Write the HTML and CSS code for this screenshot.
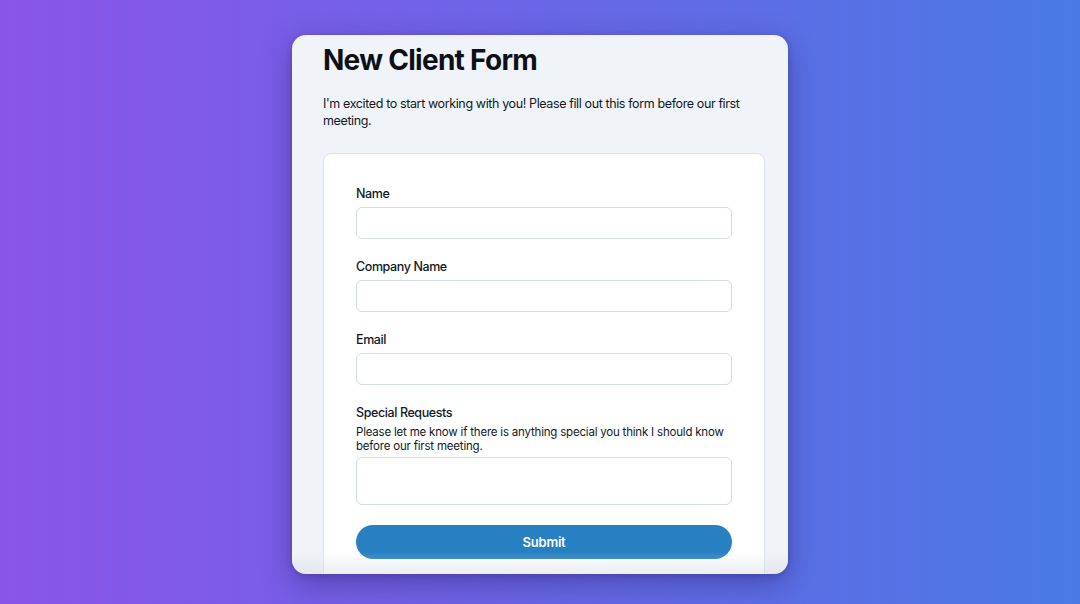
FILE: index.html
```html
<!DOCTYPE html>
<html lang="en">
<head>
<meta charset="utf-8">
<title>New Client Form</title>
<link rel="stylesheet" href="styles.css">
</head>
<body>
<div class="stage">
  <div class="window">
    <div class="scroll">
      <h1 class="title">New Client Form</h1>
      <p class="intro">I'm excited to start working with you! Please fill out this form before our first meeting.</p>
      <form class="card">
        <div class="field">
          <label class="label" for="name">Name</label>
          <input class="input" id="name" type="text">
        </div>
        <div class="field">
          <label class="label" for="company">Company Name</label>
          <input class="input" id="company" type="text">
        </div>
        <div class="field">
          <label class="label" for="email">Email</label>
          <input class="input" id="email" type="email">
        </div>
        <div class="field">
          <label class="label" for="requests">Special Requests</label>
          <p class="help">Please let me know if there is anything special you think I should know before our first meeting.</p>
          <textarea class="textarea" id="requests"></textarea>
        </div>
        <button class="submit" type="button">Submit</button>
      </form>
    </div>
    <div class="fade"></div>
  </div>
</div>
</body>
</html>
```

FILE: styles.css
```css
* { box-sizing: border-box; }
html, body { margin: 0; height: 100%; }
body {
  font-family: Inter, "Noto Sans", sans-serif;
  background: linear-gradient(90deg, #8a54e8 0%, #6a66e6 50%, #4a79e5 100%);
  overflow: hidden;
}
.stage {
  height: 100%;
  display: flex;
  justify-content: center;
  padding-top: 35px;
}
.window {
  position: relative;
  width: 496px;
  height: 539px;
  background: #f0f4f8;
  border-radius: 14px;
  overflow: hidden;
  box-shadow: 0 10px 30px rgba(30, 20, 90, 0.35), 0 2px 6px rgba(30, 20, 90, 0.2);
}
.scroll {
  padding: 8px 23px 32px 31px;
}
.title {
  margin: 0;
  font-size: 28px;
  line-height: 34px;
  font-weight: 700;
  color: #0d1117;
  letter-spacing: -0.72px;
}
.intro {
  margin: 18px 0 24px;
  font-size: 12.5px;
  line-height: 17px;
  letter-spacing: -0.38px;
  color: #111827;
}
.card {
  background: #ffffff;
  border: 1px solid #dbe2ea;
  border-radius: 8px;
  padding: 32px;
  display: flex;
  flex-direction: column;
}
.field {
  display: flex;
  flex-direction: column;
  margin-bottom: 20px;
}
.label {
  font-size: 12.5px;
  line-height: 16px;
  font-weight: 500;
  letter-spacing: -0.4px;
  color: #111827;
  margin-bottom: 5px;
}
.help {
  margin: -1px 0 4px;
  font-size: 11.5px;
  line-height: 14px;
  letter-spacing: -0.2px;
  color: #111827;
}
.input, .textarea {
  width: 100%;
  height: 32px;
  border: 1px solid #d3dbe5;
  border-radius: 6px;
  background: #fff;
  font: inherit;
  outline: none;
  padding: 0 10px;
}
.textarea {
  height: 48px;
  resize: none;
  display: block;
}
.submit {
  height: 34px;
  border: none;
  border-radius: 17px;
  background: #2680c2;
  color: #fff;
  font-family: inherit;
  font-size: 13px;
  font-weight: 600;
  letter-spacing: -0.2px;
}
.fade {
  position: absolute;
  left: 0;
  right: 0;
  bottom: 0;
  height: 22px;
  background: linear-gradient(180deg, rgba(225, 228, 234, 0) 0%, rgba(215, 219, 226, 0.5) 100%);
  pointer-events: none;
}
```
